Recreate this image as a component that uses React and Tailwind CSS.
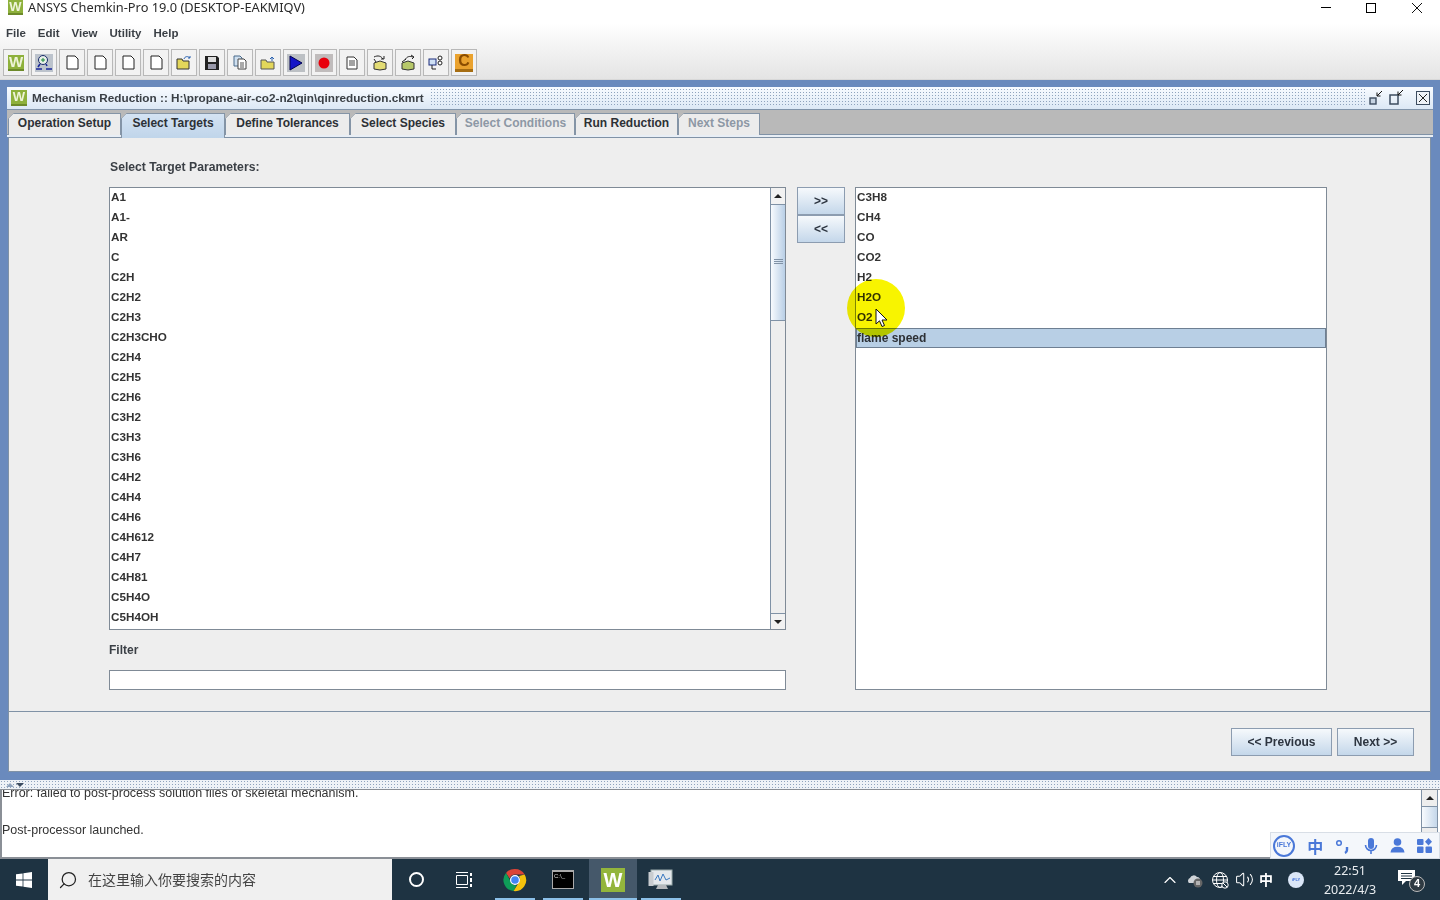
import React from "react";
import { ChevronUp, Search, Volume2 } from "lucide-react";

const leftItems = ["A1","A1-","AR","C","C2H","C2H2","C2H3","C2H3CHO","C2H4","C2H5","C2H6","C3H2","C3H3","C3H6","C4H2","C4H4","C4H6","C4H612","C4H7","C4H81","C5H4O","C5H4OH"];
const rightItems = ["C3H8","CH4","CO","CO2","H2","H2O","O2"];

const tabs = [
  { label: "Operation Setup", w: "w-[113px]" },
  { label: "Select Targets", w: "w-[104px]", active: true },
  { label: "Define Tolerances", w: "w-[125px]" },
  { label: "Select Species", w: "w-[106px]" },
  { label: "Select Conditions", w: "w-[119px]", off: true },
  { label: "Run Reduction", w: "w-[103px]" },
  { label: "Next Steps", w: "w-[82px]", off: true },
];

const dots = "bg-[radial-gradient(#8fa3bd_0.7px,transparent_0.8px)] bg-[length:3px_3px]";

const WLogo = ({ size = "w-[16px] h-[16px] text-[13px]" }) => (
  <div className={`${size} bg-[#8eb13c] border-b-2 border-[#6d8a2a] flex items-center justify-center text-[#eef4d8] font-bold leading-none shrink-0`}>W</div>
);

const Page = () => (
  <svg width="13" height="15" viewBox="0 0 13 15"><path d="M1 1H9L12 4V14H1Z" fill="#fff" stroke="#222" /></svg>
);

const toolIcons = [
  <WLogo size="w-[16px] h-[16px] text-[15px]" />,
  <svg width="18" height="18" viewBox="0 0 18 18"><rect width="18" height="18" fill="#bcc3cc" /><circle cx="8" cy="6" r="4.5" fill="#e8f0e8" stroke="#1a2a6a" /><path d="M8 4V8M6 6H10" stroke="#1a8a3a" /><path d="M5 10L3 13M11 10L12 12M1 15H7M11 15H17" stroke="#1b2a9a" strokeWidth="1.6" /></svg>,
  <Page />, <Page />, <Page />, <Page />,
  <svg width="16" height="15" viewBox="0 0 16 15"><path d="M1 4H6L7 6H13V14H1Z" fill="#e3d65a" stroke="#333" /><path d="M8 4C9 1 12 1 14 3M14 1V3H12" fill="none" stroke="#2a62b0" /></svg>,
  <svg width="14" height="14" viewBox="0 0 14 14"><path d="M0 0H12L14 2V14H0Z" fill="#222" /><rect x="3" y="1" width="8" height="5" fill="#ddd" /><rect x="3" y="8" width="8" height="5" fill="#99a" /></svg>,
  <svg width="14" height="15" viewBox="0 0 14 15"><path d="M1 1H7L9 3V11H1Z" fill="#cfe0f0" stroke="#4a6a8a" /><path d="M5 4H11L13 6V14H5Z" fill="#fff" stroke="#444" /><path d="M7 8H11M7 10H11M7 12H11" stroke="#555" /></svg>,
  <svg width="16" height="14" viewBox="0 0 16 14"><path d="M1 4H6L7 6H14V13H1Z" fill="#e3d65a" stroke="#555" /><path d="M12 5V1M10 3L12 1L14 3" fill="none" stroke="#2a62b0" /></svg>,
  <svg width="18" height="18" viewBox="0 0 18 18"><rect width="18" height="18" fill="#bcc0c4" /><path d="M3 2L15 9L3 16Z" fill="#1414c8" stroke="#000050" /></svg>,
  <svg width="18" height="18" viewBox="0 0 18 18"><rect width="18" height="18" fill="#c0bcbc" /><circle cx="9" cy="9" r="5.5" fill="#e8000c" /></svg>,
  <svg width="12" height="14" viewBox="0 0 12 14"><path d="M1 1H8L11 4V13H1Z" fill="#fff" stroke="#333" /><path d="M3 5H9M3 7H9M3 9H9" stroke="#444" /></svg>,
  <svg width="16" height="17" viewBox="0 0 16 17"><path d="M2 9L8 7L14 9V15L8 16L2 15Z" fill="#e3dc74" stroke="#333" /><path d="M2 3C6 1 9 2 11 5M9 5H12V2M4 8L2 5" fill="none" stroke="#222" /></svg>,
  <svg width="16" height="17" viewBox="0 0 16 17"><path d="M2 9L8 7L14 9V15L8 16L2 15Z" fill="#b7c86a" stroke="#333" /><path d="M5 6C7 2 10 2 13 3M11 1L14 3L12 5M2 8L6 5" fill="none" stroke="#222" /></svg>,
  <svg width="16" height="15" viewBox="0 0 16 15"><rect x="1" y="4" width="7" height="6" fill="#cfe0f5" stroke="#1a2a7a" /><path d="M4 10V14H8" fill="none" stroke="#222" /><circle cx="12" cy="3" r="2" fill="#fff" stroke="#222" /><circle cx="12" cy="8" r="2" fill="#fff" stroke="#222" /></svg>,
  <div className="w-[18px] h-[18px] bg-[#eaa22e] border-b-[3px] border-[#a66d12] flex items-center justify-center text-[#8a4c00] font-bold text-[16px] leading-none">C</div>,
];

const Tab = ({ label, w, active, off }) => (
  <div className={`${w} shrink-0 relative z-10 flex items-center justify-center border border-[#8494a6] border-b-0 [clip-path:polygon(6px_0,100%_0,100%_100%,0_100%,0_6px)] ${active ? "h-[25px] pb-[6px] bg-gradient-to-b from-[#d4e3f3] to-[#c0d5ea]" : "h-[22px] pb-[3px] bg-[#ececec]"} ${off ? "text-[#8d98a5]" : "text-[#2d3136]"}`}>
    <svg width="6" height="6" viewBox="0 0 6 6" className="absolute -left-[1px] -top-[1px]"><path d="M0 6L6 0" stroke="#8494a6" /></svg>
    <span className="text-[12px] font-bold leading-none">{label}</span>
  </div>
);

const ListRow = ({ children }) => (
  <div className="h-[20px] pl-[1px] pb-[2px] flex items-center text-[11.7px] font-bold text-[#333]">{children}</div>
);

const ArrowBtn = ({ children }) => (
  <div className="h-[28px] flex items-center justify-center border border-[#8c9cb0] bg-gradient-to-b from-[#f6f9fc] to-[#c4d7ea] text-[12px] font-bold text-[#2d3540]">{children}</div>
);

const NavBtn = ({ w, children }) => (
  <div className={`${w} h-[28px] flex items-center justify-center border border-[#8c9cb0] bg-gradient-to-b from-[#f6f9fc] to-[#c4d7ea] text-[12px] font-bold text-[#2d3540]`}>{children}</div>
);

const TaskSlot = ({ active, lined = true, className = "", children }) => (
  <div className={`w-[48px] h-full relative flex items-center justify-center shrink-0 ${active ? "bg-[#45586a]" : ""} ${className}`}>
    {children}
    {lined && <div className={`absolute bottom-0 h-[2px] bg-[#8cc0e8] ${active ? "left-0 right-0" : "left-[4px] right-[4px]"}`} />}
  </div>
);

const App = () => {
  return (
    <div className="w-[1440px] h-[900px] relative overflow-hidden flex flex-col bg-white font-['Liberation_Sans',sans-serif]">
      {/* app header */}
      <div className="h-[80px] shrink-0 bg-gradient-to-b from-white from-30% to-[#e4e4e4] border-b border-[#d8d8d8]">
        <div className="h-[15px] flex items-center pl-[8px]">
          <WLogo size="w-[15px] h-[15px] text-[13px]" />
          <span className="ml-[5px] text-[12.8px] font-['Noto_Sans',sans-serif] text-[#2a2a2a] leading-none">ANSYS Chemkin-Pro 19.0 (DESKTOP-EAKMIQV)</span>
          <div className="ml-auto flex items-center h-full">
            <div className="w-[45px] flex justify-center"><div className="w-[10px] h-[1px] bg-black" /></div>
            <div className="w-[45px] flex justify-center"><div className="w-[10px] h-[10px] border border-black" /></div>
            <div className="w-[47px] flex justify-center">
              <svg width="10" height="10" viewBox="0 0 10 10"><path d="M0 0L10 10M10 0L0 10" stroke="#111" /></svg>
            </div>
          </div>
        </div>
        <div className="h-[20px] mt-[9px] pl-[6px] flex items-center gap-[12px] text-[11.5px] font-bold text-[#3a3f45]">
          <span>File</span><span>Edit</span><span>View</span><span>Utility</span><span>Help</span>
        </div>
        <div className="mt-[5px] pl-[3px] flex gap-[2px]">
          {toolIcons.map((ic, i) => (
            <div key={i} className="w-[26px] h-[27px] flex items-center justify-center border border-[#b8b8b8] bg-[#f2f2f2]">{ic}</div>
          ))}
        </div>
      </div>

      {/* internal frame */}
      <div className="h-[700px] shrink-0 bg-[#6a8abd] pt-[7px] pl-[7px] pr-[7px] pb-[8px] flex flex-col">
        <div className="h-[23px] shrink-0 flex items-center pl-[4px] pb-[1px] bg-gradient-to-b from-[#f8fbff] to-[#dce8f5] border-b border-[#8194aa]">
          <WLogo size="w-[16px] h-[16px] text-[13px]" />
          <span className="ml-[5px] text-[11.76px] font-bold text-[#3a3f45] whitespace-nowrap">Mechanism Reduction :: H:\propane-air-co2-n2\qin\qinreduction.ckmrt</span>
          <div className={`ml-[6px] w-[936px] h-[19px] ${dots}`} />
          <div className="flex-1 flex items-center justify-end gap-[5px] pr-[3px]">
            <svg width="15" height="15" viewBox="0 0 15 15"><rect x="1" y="8" width="6" height="6" fill="#c6d3e2" stroke="#3c4c60" strokeWidth="1.4" /><path d="M13 1L8 6M8 2.5V6H11.5" fill="none" stroke="#111" /></svg>
            <svg width="15" height="15" viewBox="0 0 15 15"><rect x="1" y="5" width="8" height="9" fill="none" stroke="#3c4c60" strokeWidth="1.5" /><path d="M14 0L9 5M9 1.5V5H12.5" fill="none" stroke="#111" /></svg>
            <svg width="14" height="14" viewBox="0 0 14 14" className="ml-[7px]"><rect x="0.5" y="0.5" width="13" height="13" fill="#eef2f7" stroke="#3c4c60" /><path d="M3 3L11 11M11 3L3 11" stroke="#222" /></svg>
          </div>
        </div>

        <div className="h-[25px] shrink-0 bg-[#b9b9b9] flex pl-[1px] pt-[3px] items-start border-b border-[#8092a6]">
          {tabs.map((t) => <Tab key={t.label} {...t} />)}
        </div>
        <div className="h-[2px] shrink-0 bg-[#e8eef5]" />

        {/* step panel */}
        <div className="flex-1 ml-[1px] mr-[2px] bg-[#eeeeee] border border-[#8092a6] flex flex-col">
          <div className="h-[574px] shrink-0 border-b border-[#8092a6] pl-[100px] pt-[19px] flex">
            <div className="w-[677px] shrink-0">
              <div className="h-[20px] pl-[1px] flex items-center text-[12.2px] font-bold text-[#3a3f45]">Select Target Parameters:</div>
              <div className="mt-[10px] h-[443px] bg-white border border-[#7f8a96] flex">
                <div className="flex-1 overflow-hidden">
                  {leftItems.map((x) => <ListRow key={x}>{x}</ListRow>)}
                </div>
                <div className="w-[15px] shrink-0 flex flex-col border-l border-[#8092a6] bg-[#eeeeee]">
                  <div className="h-[16px] flex items-center justify-center bg-[#f2f2f2]">
                    <div className="w-0 h-0 border-x-[4px] border-x-transparent border-b-[4px] border-b-[#222]" />
                  </div>
                  <div className="h-[117px] pb-[2px] flex items-center justify-center border-y border-[#8092a6] bg-gradient-to-r from-[#f8fbfe] to-[#b9cfe6]">
                    <div className="w-[9px] h-[5px] border-y border-[#8092a6] flex items-center"><div className="w-full h-[1px] bg-[#8092a6]" /></div>
                  </div>
                  <div className="flex-1" />
                  <div className="h-[16px] flex items-center justify-center border-t border-[#8092a6] bg-[#f2f2f2]">
                    <div className="w-0 h-0 border-x-[4px] border-x-transparent border-t-[4px] border-t-[#222]" />
                  </div>
                </div>
              </div>
              <div className="h-[20px] mt-[10px] flex items-center text-[12px] font-bold text-[#3a3f45]">Filter</div>
              <div className="mt-[10px] h-[20px] bg-white border border-[#7f8a96]" />
            </div>

            <div className="w-[48px] ml-[11px] pt-[30px] shrink-0">
              <ArrowBtn>&gt;&gt;</ArrowBtn>
              <ArrowBtn>&lt;&lt;</ArrowBtn>
            </div>

            <div className="w-[472px] ml-[10px] mt-[30px] h-[503px] bg-white border border-[#7f8a96]">
              {rightItems.map((x) => <ListRow key={x}>{x}</ListRow>)}
              <div className="h-[20px] flex items-center text-[12px] font-bold text-[#2d3136] bg-[#b8cfe5] border border-[#6e7f92]">flame speed</div>
            </div>
          </div>
          <div className="flex-1 flex justify-end items-start pt-[16px] pr-[16px] gap-[5px]">
            <NavBtn w="w-[101px]">&lt;&lt; Previous</NavBtn>
            <NavBtn w="w-[77px]">Next &gt;&gt;</NavBtn>
          </div>
        </div>
      </div>

      {/* splitter */}
      <div className={`h-[10px] shrink-0 bg-[#eef2f7] ${dots} border-b border-[#8a8f96] flex items-center pl-[6px] gap-[2px]`}>
        <div className="w-0 h-0 border-x-[4px] border-x-transparent border-b-[4px] border-b-[#8fa3bd]" />
        <div className="w-0 h-0 border-x-[4px] border-x-transparent border-t-[4px] border-t-[#3c4c60]" />
      </div>

      {/* log */}
      <div className="h-[69px] shrink-0 bg-white border-l-2 border-b-2 border-[#8a8f96] flex overflow-hidden">
        <div className="flex-1 text-[12.5px] text-[#333] leading-[20px]">
          <div className="-mt-[7px] h-[20px]">Error: failed to post-process solution files of skeletal mechanism.</div>
          <div className="h-[17px]" />
          <div>Post-processor launched.</div>
        </div>
        <div className="w-[17px] mr-[2px] shrink-0 flex flex-col border-x border-[#8092a6] bg-[#eeeeee]">
          <div className="h-[16px] flex items-center justify-center">
            <div className="w-0 h-0 border-x-[4px] border-x-transparent border-b-[4px] border-b-[#222]" />
          </div>
          <div className="h-[22px] border-y border-[#8092a6] bg-gradient-to-r from-[#f8fbfe] to-[#c5d7ea]" />
        </div>
      </div>

      {/* taskbar */}
      <div className="flex-1 bg-[#1e3342] flex items-center text-white">
        <div className="w-[48px] h-full flex items-center justify-center shrink-0">
          <svg width="16" height="16" viewBox="0 0 16 16" fill="#fff"><path d="M0 2.3L6.6 1.4V7.6H0ZM7.4 1.3L16 0V7.6H7.4ZM0 8.4H6.6V14.6L0 13.7ZM7.4 8.4H16V16L7.4 14.7Z" /></svg>
        </div>
        <div className="w-[344px] h-full bg-[#f0f0f0] flex items-center pl-[10px] shrink-0">
          <Search size={20} strokeWidth={1.5} className="text-[#222] -scale-x-100" />
          <span className="ml-[10px] text-[14px] text-[#444] font-['Noto_Sans_CJK_SC',sans-serif]">在这里输入你要搜索的内容</span>
        </div>
        <TaskSlot lined={false}>
          <div className="w-[15px] h-[15px] rounded-full border-2 border-white" />
        </TaskSlot>
        <TaskSlot lined={false}>
          <svg width="18" height="16" viewBox="0 0 18 16" fill="none" stroke="#fff"><path d="M1 .5H13M1 15.5H13M1.5 3.5H12.5V12.5H1.5Z" /><path d="M16 1V4M16 6V10M16 12V15" strokeWidth="2" /></svg>
        </TaskSlot>
        <TaskSlot className="ml-[3px]">
          <svg width="24" height="24" viewBox="0 0 24 24">
            <path d="M12 1A11 11 0 0 1 21.6 6.5H12A5.5 5.5 0 0 0 6.7 10.5L3 5A11 11 0 0 1 12 1Z" fill="#db4437" />
            <path d="M3 5L8.2 14.5A5.5 5.5 0 0 0 13.5 17.3L10.6 23A11 11 0 0 1 3 5Z" fill="#0f9d58" />
            <path d="M21.6 6.5A11 11 0 0 1 10.6 23L15.6 14.7A5.5 5.5 0 0 0 16 8Z" fill="#f4c20d" />
            <circle cx="12" cy="12" r="4.4" fill="#4285f4" stroke="#fff" strokeWidth="1.2" />
          </svg>
        </TaskSlot>
        <TaskSlot>
          <div className="w-[22px] h-[19px] bg-black border border-[#aaa] border-t-[2px] text-[6px] leading-[8px] pl-[1px] text-[#ddd]">C:\_</div>
        </TaskSlot>
        <TaskSlot active className="ml-[2px]">
          <div className="w-[24px] h-[24px] bg-[#93b53c] flex items-center justify-center text-white font-bold text-[20px] leading-none">W</div>
        </TaskSlot>
        <TaskSlot>
          <svg width="26" height="24" viewBox="0 0 26 24"><rect x="3" y="2" width="21" height="15" fill="#e4e8ec" stroke="#9aa" /><rect x="0.5" y="4" width="5" height="14" fill="#c8ccd0" /><path d="M7 12L10 7L12 13L15 6L18 12L22 10" fill="none" stroke="#3a78c0" /><path d="M8 21H20L18 17H10Z" fill="#b4b8bc" /></svg>
        </TaskSlot>

        <div className="ml-auto flex items-center h-full">
          <ChevronUp size={20} strokeWidth={1.4} className="mr-[4px]" />
          <svg width="18" height="16" viewBox="0 0 18 16" className="ml-[2px]"><path d="M3 11A3 3 0 0 1 4 6A4 4 0 0 1 11 5A3 3 0 0 1 14 9V11Z" fill="#d0d4d8" /><circle cx="12" cy="11" r="4.5" fill="#666" /><path d="M11 9V13M13 9V13" stroke="#fff" /></svg>
          <svg width="18" height="18" viewBox="0 0 18 18" fill="none" stroke="#fff" className="ml-[7px]"><circle cx="9" cy="9" r="7.5" /><ellipse cx="9" cy="9" rx="3.5" ry="7.5" /><path d="M1.5 9H16.5M2.5 5.5H15.5M2.5 12.5H15.5" /><circle cx="14" cy="14" r="3.2" fill="#1e3342" /><path d="M12 12L16 16" /></svg>
          <Volume2 size={19} strokeWidth={1.3} className="ml-[6px]" />
          <span className="ml-[5px] w-[16px] text-[14px] font-bold font-['Noto_Sans_CJK_SC',sans-serif]">中</span>
          <div className="ml-[13px] w-[16px] h-[16px] rounded-full bg-[#dbe7f8] text-[#3f6fd8] text-[4px] font-bold flex items-center justify-center">iFLY</div>
          <div className="ml-[8px] w-[76px] text-center text-[12.5px] leading-[19px] font-['Noto_Sans',sans-serif] text-[#e8ecef]">
            <div>22:51</div>
            <div>2022/4/3</div>
          </div>
          <div className="ml-[10px] mr-[18px] relative w-[24px] h-[24px]">
            <svg width="17" height="16" viewBox="0 0 17 16" className="mt-[2px]"><path d="M0 0H17V11H8L4 15V11H0Z" fill="#fff" /><path d="M3 3.5H14M3 6H14M3 8.500H14" stroke="#1e3342" /></svg>
            <div className="absolute -right-[3px] bottom-0 w-[16px] h-[16px] rounded-full bg-[#2f3a42] border border-[#bbb] text-[11px] font-bold leading-none flex items-center justify-center">4</div>
          </div>
        </div>
      </div>

      {/* ime bar */}
      <div className="absolute left-[1270px] top-[832px] w-[170px] h-[27px] bg-[#f4f7fb] border border-[#d8dee6] flex items-center justify-between pl-[2px] pr-[7px] text-[#4a78d8]">
        <div className="w-[22px] h-[22px] rounded-full border-2 border-[#4a78d8] text-[7px] font-bold flex items-center justify-center">iFLY</div>
        <span className="text-[16px] font-bold font-['Noto_Sans_CJK_SC',sans-serif] leading-none">中</span>
        <svg width="16" height="16" viewBox="0 0 16 16" fill="none" stroke="#4a78d8"><circle cx="4" cy="5" r="2.3" strokeWidth="1.5" /><path d="M12 9V12Q12 14 10 15" strokeWidth="2.4" /></svg>
        <svg width="14" height="18" viewBox="0 0 14 18" fill="#4a78d8"><rect x="4" y="1" width="6" height="11" rx="3" /><path d="M1.500 8A5.500 5.500 0 0 0 12.500 8M7 13.500V17" fill="none" stroke="#4a78d8" strokeWidth="1.6" /></svg>
        <svg width="15" height="15" viewBox="0 0 15 15" fill="#4a78d8"><circle cx="7.500" cy="4" r="3.800" /><path d="M0.500 14.500Q1 8.800 7.500 8.800T14.500 14.500Z" /></svg>
        <svg width="15" height="15" viewBox="0 0 15 15" fill="#4a78d8"><rect x="0" y="1" width="6.500" height="6" rx="1" /><path d="M11.500 0L15 3.700L11.500 7.400L8 3.700Z" /><rect x="0" y="8.500" width="6.500" height="6.500" rx="1" /><rect x="8.500" y="8.500" width="6.500" height="6.500" rx="1" /></svg>
      </div>

      {/* cursor highlight from the screen recorder */}
      <div className="absolute left-[847px] top-[279px] w-[58px] h-[58px] rounded-full bg-[#f8f400] mix-blend-multiply" />
      <svg width="14" height="20" viewBox="0 0 14 20" className="absolute left-[875px] top-[308px]">
        <path d="M1 1V16L4.500 12.800L7 18.500L9.500 17.500L7 12H12Z" fill="#fff" stroke="#111" />
      </svg>
    </div>
  );
};

export default App;
